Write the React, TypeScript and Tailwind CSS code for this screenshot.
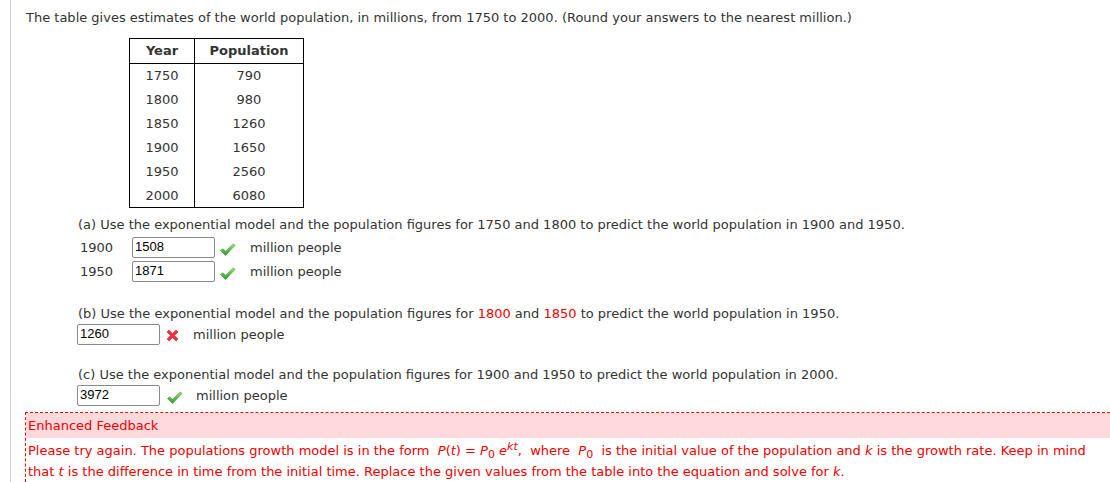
import React from 'react';

const font = { fontFamily: '"DejaVu Sans", Verdana, sans-serif' };

function Check() {
  return (
    <svg width="17" height="15" viewBox="0 0 17 15" className="shrink-0">
      <defs>
        <linearGradient id="ck" x1="0" y1="0" x2="0" y2="1">
          <stop offset="0" stopColor="#9be27a" />
          <stop offset="1" stopColor="#2e9a2a" />
        </linearGradient>
      </defs>
      <path d="M1.5 8.5 L3.8 6.8 L6.5 9.3 L14.3 2 L16 3.4 L6.5 13.5 Z" fill="url(#ck)" stroke="#3a9a33" strokeWidth="0.6" strokeLinejoin="round" />
    </svg>
  );
}

function Cross() {
  return (
    <svg width="15" height="15" viewBox="0 0 15 15" className="shrink-0">
      <path d="M2 4 L4 2 L7.5 5.5 L11 2 L13 4 L9.5 7.5 L13 11 L11 13 L7.5 9.5 L4 13 L2 11 L5.5 7.5 Z" fill="#f0303a" stroke="#e02030" strokeWidth="0.6" strokeLinejoin="round" />
    </svg>
  );
}

function Box({ value }: { value: string }) {
  return (
    <div
      className="w-[83px] h-[21px] border border-[#8a8a8a] rounded-[2px] bg-white px-[2px] text-[13px] leading-[18px] text-black"
      style={{ fontFamily: '"Liberation Sans", Arial, sans-serif' }}
    >
      {value}
    </div>
  );
}

const years = [
  ['1750', '790'],
  ['1800', '980'],
  ['1850', '1260'],
  ['1900', '1650'],
  ['1950', '2560'],
  ['2000', '6080'],
];

export default function App() {
  return (
    <div className="w-[1110px] h-[482px] overflow-hidden bg-white text-[13px] text-[#333]" style={font}>
      <div className="ml-[10px] h-full border-l border-[#cfcfcf] pl-[15px] pt-[10px]">
        <p className="leading-[16px]">
          The table gives estimates of the world population, in millions, from 1750 to 2000. (Round your answers to the nearest million.)
        </p>

        <table className="ml-[103px] mt-[12px] border-collapse border border-black">
          <thead>
            <tr className="h-[25px]">
              <th className="w-[65px] border border-black font-bold text-center">Year</th>
              <th className="w-[109px] border border-black font-bold text-center">Population</th>
            </tr>
          </thead>
          <tbody>
            {years.map(([y, p]) => (
              <tr key={y} className="h-[24px]">
                <td className="border-r border-black text-center">{y}</td>
                <td className="text-center">{p}</td>
              </tr>
            ))}
          </tbody>
        </table>

        <div className="ml-[52px]">
          <p className="mt-[9px] leading-[16px]">
            (a) Use the exponential model and the population figures for 1750 and 1800 to predict the world population in 1900 and 1950.
          </p>
          <div className="mt-[4px] flex flex-col gap-[3px]">
            {[
              ['1900', '1508'],
              ['1950', '1871'],
            ].map(([y, v]) => (
              <div key={y} className="flex items-center">
                <span className="w-[54px] pl-[2px]">{y}</span>
                <Box value={v} />
                <span className="ml-[4px] mt-[4px]">
                  <Check />
                </span>
                <span className="ml-[14px]">million people</span>
              </div>
            ))}
          </div>

          <p className="mt-[24px] leading-[16px]">
            (b) Use the exponential model and the population figures for{' '}
            <span className="text-[#e00]">1800</span> and <span className="text-[#e00]">1850</span> to predict the world population in 1950.
          </p>
          <div className="mt-[2px] -ml-[1px] flex items-center">
            <Box value="1260" />
            <span className="ml-[5px] mt-[2px]">
              <Cross />
            </span>
            <span className="ml-[13px]">million people</span>
          </div>

          <p className="mt-[22px] leading-[16px]">
            (c) Use the exponential model and the population figures for 1900 and 1950 to predict the world population in 2000.
          </p>
          <div className="mt-[2px] -ml-[1px] flex items-center">
            <Box value="3972" />
            <span className="ml-[6px] mt-[4px]">
              <Check />
            </span>
            <span className="ml-[13px]">million people</span>
          </div>
        </div>

        <div className="mt-[6px] -ml-[1px] border-t border-l border-dashed border-[#e00] text-[#e00]">
          <div className="h-[25px] bg-[#ffd9db] pl-[2px] leading-[26px]">Enhanced Feedback</div>
          <div className="pl-[2px] pt-[2px] leading-[21px]">
            Please try again. The populations growth model is in the form&nbsp; <i>P</i>(<i>t</i>) = <i>P</i>
            <sub className="text-[11px]">0</sub> <i>e</i>
            <sup className="text-[11px]"><i>kt</i></sup>,&nbsp; where&nbsp; <i>P</i>
            <sub className="text-[11px]">0</sub>&nbsp; is the initial value of the population and <i>k</i> is the growth rate. Keep in mind that{' '}
            <i>t</i> is the difference in time from the initial time. Replace the given values from the table into the equation and solve for <i>k</i>.
          </div>
        </div>
      </div>
    </div>
  );
}
